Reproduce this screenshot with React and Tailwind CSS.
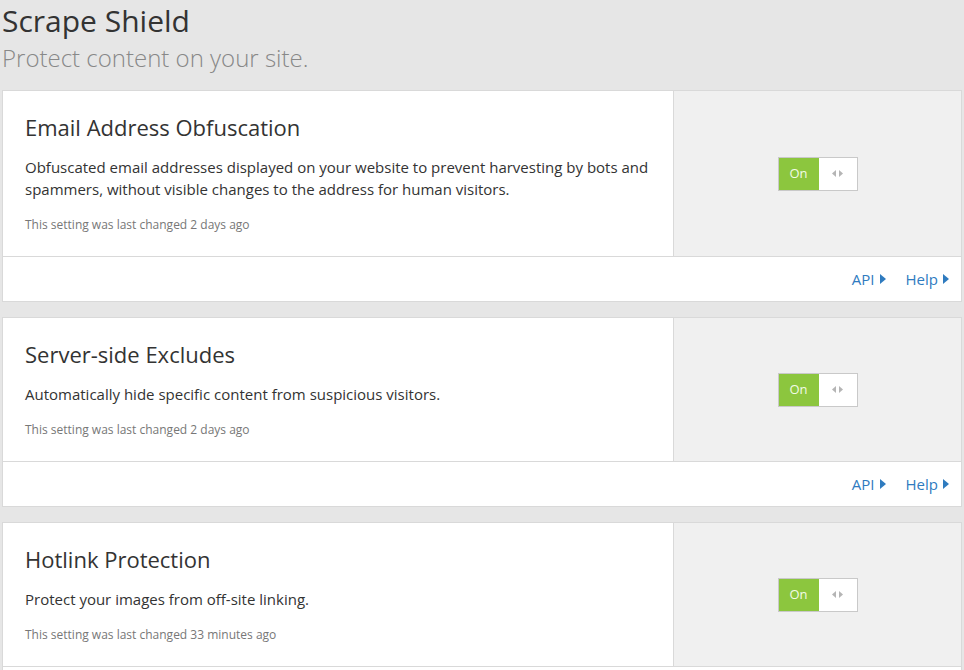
import { useState } from 'react';

const settings = [
  {
    id: 'email',
    title: 'Email Address Obfuscation',
    description:
      'Obfuscated email addresses displayed on your website to prevent harvesting by bots and spammers, without visible changes to the address for human visitors.',
    changed: '2 days ago'
  },
  {
    id: 'sse',
    title: 'Server-side Excludes',
    description: 'Automatically hide specific content from suspicious visitors.',
    changed: '2 days ago'
  },
  {
    id: 'hotlink',
    title: 'Hotlink Protection',
    description: 'Protect your images from off-site linking.',
    changed: '33 minutes ago'
  }
];

function Toggle({ on, onClick }) {
  return (
    <button onClick={onClick} className="flex h-[34px] w-[80px] border border-[#c9c9c9] bg-white">
      <span className={`flex h-full w-[40px] items-center justify-center text-[13px] ${on ? 'bg-[#8cc63e] text-[#f2fbe6]' : 'text-transparent'}`}>
        On
      </span>
      <span className="flex flex-1 items-center justify-center gap-[3px] text-[#b5b5b5]">
        <svg width="4" height="7" viewBox="0 0 4 7"><path d="M4 0L0 3.5L4 7Z" fill="currentColor" /></svg>
        <svg width="4" height="7" viewBox="0 0 4 7"><path d="M0 0L4 3.5L0 7Z" fill="currentColor" /></svg>
      </span>
    </button>
  );
}

function Arrow() {
  return (
    <svg width="6" height="10" viewBox="0 0 6 10" className="ml-[5px]">
      <path d="M0 0L6 5L0 10Z" fill="currentColor" />
    </svg>
  );
}

function SettingCard({ setting }) {
  const [on, setOn] = useState(true);
  return (
    <div className="border border-[#d9d9d9] bg-white">
      <div className="flex">
        <div className="flex-1 border-r border-[#d9d9d9] px-[22px] pt-[21px] pb-[23px]">
          <h2 className="text-[22px] leading-[30px] text-[#333]">{setting.title}</h2>
          <p className="mt-[14px] text-[15px] leading-[22px] text-[#333]">{setting.description}</p>
          <p className="mt-[17px] text-[12px] leading-[16px] text-[#777]">
            This setting was last changed {setting.changed}
          </p>
        </div>
        <div className="flex w-[287px] items-center justify-center bg-[#f0f0f0]">
          <Toggle on={on} onClick={() => setOn(!on)} />
        </div>
      </div>
      <div className="flex h-[45px] items-center justify-end gap-[20px] border-t border-[#d9d9d9] pr-[12px] text-[15px] text-[#2f7bbf]">
        <a href="#" className="flex items-center">API<Arrow /></a>
        <a href="#" className="flex items-center">Help<Arrow /></a>
      </div>
    </div>
  );
}

export default function App() {
  return (
    <div className="h-[670px] overflow-hidden bg-[#e6e6e6] px-[2px] pt-[1px] font-['Open_Sans',sans-serif]">
      <h1 className="text-[30px] leading-[40px] text-[#333]">Scrape Shield</h1>
      <p className="text-[24px] font-light leading-[34px] text-[#888]">Protect content on your site.</p>
      <div className="mt-[15px] flex flex-col gap-[15px]">
        {settings.map(s => (
          <SettingCard key={s.id} setting={s} />
        ))}
      </div>
    </div>
  );
}
